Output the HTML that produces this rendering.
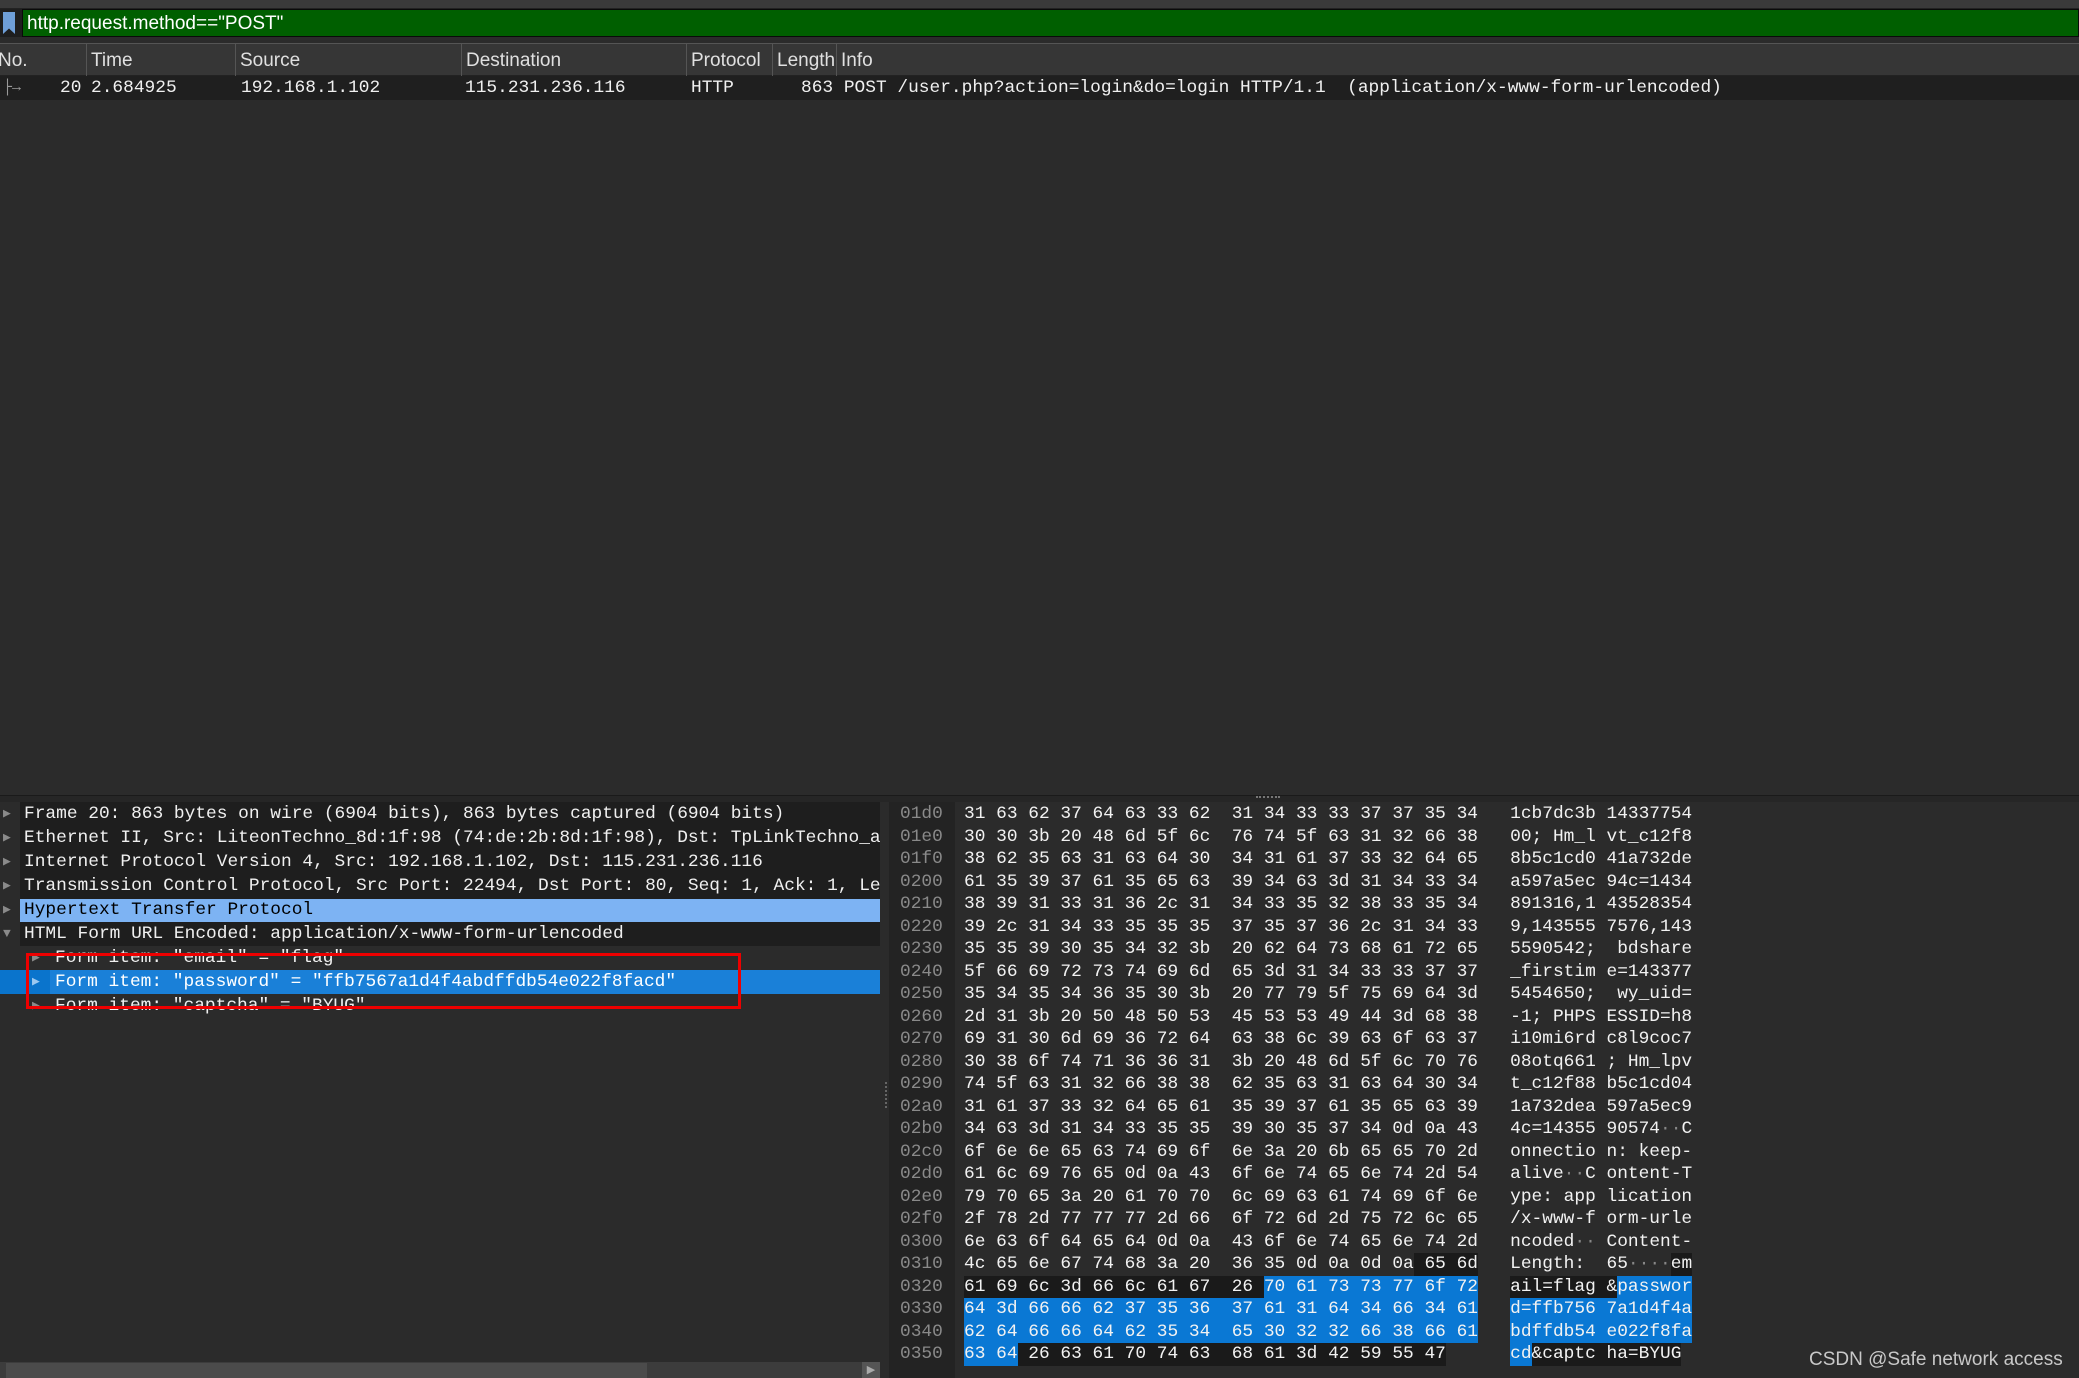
<!DOCTYPE html>
<html><head><meta charset="utf-8"><style>
*{margin:0;padding:0;box-sizing:border-box}
body{width:2079px;height:1378px;background:#2b2b2b;position:relative;overflow:hidden;font-family:"Liberation Sans",sans-serif}
.a{position:absolute}
.mono{font-family:"Liberation Mono",monospace}
.hdr span{position:absolute;top:0;height:32px;line-height:34px;color:#e0e0e0;font-size:19px;border-left:1px solid #555;padding-left:4px}
.tr{position:absolute;left:0;width:880px;height:24px;line-height:24px;font-size:17.85px;color:#f0f0f0;white-space:pre}
.tr .t{position:absolute;left:24px;top:0}
.tr .ar{position:absolute;left:3px;top:0;color:#8a8a8a;font-size:13px}
.pk span{position:absolute;top:0}
pre{font-family:"Liberation Mono",monospace;font-size:17.85px;line-height:22.5px;color:#f2f2f2}
.k{display:inline-block;background:#1a1a1a;height:22.5px}
.b{display:inline-block;background:#0a78d4;height:22.5px}
.d{color:#888}
</style></head><body>
<div class="a" style="left:0;top:0;width:2079px;height:9px;background:#3a3a3a;border-bottom:1px solid #222"></div>
<div class="a" style="left:0;top:9px;width:2079px;height:28px;background:#1e1e1e"></div>
<div class="a" style="left:3px;top:12px;width:12px;height:22px;background:#6f9fd8;clip-path:polygon(0 0,100% 0,100% 100%,50% 75%,0 100%)"></div>
<div class="a" style="left:22px;top:9px;width:2057px;height:28px;background:#005f00;border:1px solid #0a0a0a;color:#fff;font-size:19px;line-height:27px;padding-left:4px">http.request.method=="POST"</div>
<div class="a" style="left:0;top:37px;width:2079px;height:7px;background:#2b2b2b;border-bottom:1px solid #555"></div>
<div class="a hdr" style="left:0;top:44px;width:2079px;height:32px;background:#363636;border-bottom:1px solid #222"><span style="left:-6px;border:none">No.</span><span style="left:86px">Time</span><span style="left:235px">Source</span><span style="left:461px">Destination</span><span style="left:686px">Protocol</span><span style="left:772px">Length</span><span style="left:836px">Info</span></div>
<div class="a mono pk" style="left:0;top:76px;width:2079px;height:24px;background:#1f1f1f;color:#f0f0f0;font-size:17.85px;line-height:24px;white-space:pre"><span style="left:3px;color:#999;font-size:15px">├→</span><span style="left:60px">20</span><span style="left:91px">2.684925</span><span style="left:241px">192.168.1.102</span><span style="left:465px">115.231.236.116</span><span style="left:691px">HTTP</span><span style="left:801px">863 POST /user.php?action=login&amp;do=login HTTP/1.1  (application/x-www-form-urlencoded)</span></div>
<div class="a" style="left:0;top:795px;width:2079px;height:7px;background:#262626;border-top:1px solid #1a1a1a"></div>
<div class="a" style="left:1256px;top:796px;width:24px;height:3px;border-top:2px dotted #777"></div>
<div class="a" style="left:20px;top:802px;width:860px;height:144px;background:#1e1e1e"></div>
<div class="tr mono" style="top:802px"><span class="ar">▶</span><span class="t">Frame 20: 863 bytes on wire (6904 bits), 863 bytes captured (6904 bits)</span></div>
<div class="tr mono" style="top:826px"><span class="ar">▶</span><span class="t">Ethernet II, Src: LiteonTechno_8d:1f:98 (74:de:2b:8d:1f:98), Dst: TpLinkTechno_a</span></div>
<div class="tr mono" style="top:850px"><span class="ar">▶</span><span class="t">Internet Protocol Version 4, Src: 192.168.1.102, Dst: 115.231.236.116</span></div>
<div class="tr mono" style="top:874px"><span class="ar">▶</span><span class="t">Transmission Control Protocol, Src Port: 22494, Dst Port: 80, Seq: 1, Ack: 1, Le</span></div>
<div class="tr mono" style="top:898px"><span class="ar">▶</span><span class="a" style="left:20px;top:1px;width:860px;height:23px;background:#7db3f3"></span><span class="t" style="color:#000">Hypertext Transfer Protocol</span></div>
<div class="tr mono" style="top:922px"><span class="ar">▼</span><span class="t">HTML Form URL Encoded: application/x-www-form-urlencoded</span></div>
<div class="tr mono" style="top:946px"><span class="ar" style="left:32px">▶</span><span class="t" style="left:55px">Form item: "email" = "flag"</span></div>
<div class="tr mono" style="top:970px;background:#0a74cc"><span class="a" style="left:50px;top:0;width:830px;height:24px;background:#1a80d8"></span><span class="ar" style="left:32px;color:#9cc8f0">▶</span><span class="t" style="left:55px;color:#fff">Form item: "password" = "ffb7567a1d4f4abdffdb54e022f8facd"</span></div>
<div class="tr mono" style="top:994px"><span class="ar" style="left:32px">▶</span><span class="t" style="left:55px">Form item: "captcha" = "BYUG"</span></div>
<div class="a" style="left:26px;top:953px;width:715px;height:56px;border:3px solid #ee0000"></div>
<div class="a" style="left:0;top:1362px;width:880px;height:16px;background:#3c3c3c"></div>
<div class="a" style="left:6px;top:1363px;width:641px;height:15px;background:#4b4b4b"></div>
<div class="a" style="left:862px;top:1362px;width:18px;height:16px;background:#555;color:#aaa;font-size:11px;line-height:16px;text-align:center">▶</div>
<div class="a" style="left:880px;top:802px;width:9px;height:576px;background:#2b2b2b"></div>
<div class="a" style="left:885px;top:1082px;width:3px;height:26px;border-left:2px dotted #666"></div>
<div class="a" style="left:889px;top:802px;width:66px;height:576px;background:#232323"></div>
<pre class="a" style="left:900px;top:803px;color:#8a8a8a">01d0
01e0
01f0
0200
0210
0220
0230
0240
0250
0260
0270
0280
0290
02a0
02b0
02c0
02d0
02e0
02f0
0300
0310
0320
0330
0340
0350</pre>
<pre class="a" style="left:964px;top:803px">31 63 62 37 64 63 33 62  31 34 33 33 37 37 35 34   1cb7dc3b 14337754
30 30 3b 20 48 6d 5f 6c  76 74 5f 63 31 32 66 38   00; Hm_l vt_c12f8
38 62 35 63 31 63 64 30  34 31 61 37 33 32 64 65   8b5c1cd0 41a732de
61 35 39 37 61 35 65 63  39 34 63 3d 31 34 33 34   a597a5ec 94c=1434
38 39 31 33 31 36 2c 31  34 33 35 32 38 33 35 34   891316,1 43528354
39 2c 31 34 33 35 35 35  37 35 37 36 2c 31 34 33   9,143555 7576,143
35 35 39 30 35 34 32 3b  20 62 64 73 68 61 72 65   5590542;  bdshare
5f 66 69 72 73 74 69 6d  65 3d 31 34 33 33 37 37   _firstim e=143377
35 34 35 34 36 35 30 3b  20 77 79 5f 75 69 64 3d   5454650;  wy_uid=
2d 31 3b 20 50 48 50 53  45 53 53 49 44 3d 68 38   -1; PHPS ESSID=h8
69 31 30 6d 69 36 72 64  63 38 6c 39 63 6f 63 37   i10mi6rd c8l9coc7
30 38 6f 74 71 36 36 31  3b 20 48 6d 5f 6c 70 76   08otq661 ; Hm_lpv
74 5f 63 31 32 66 38 38  62 35 63 31 63 64 30 34   t_c12f88 b5c1cd04
31 61 37 33 32 64 65 61  35 39 37 61 35 65 63 39   1a732dea 597a5ec9
34 63 3d 31 34 33 35 35  39 30 35 37 34 0d 0a 43   4c=14355 90574<span class="d">··</span>C
6f 6e 6e 65 63 74 69 6f  6e 3a 20 6b 65 65 70 2d   onnectio n: keep-
61 6c 69 76 65 0d 0a 43  6f 6e 74 65 6e 74 2d 54   alive<span class="d">··</span>C ontent-T
79 70 65 3a 20 61 70 70  6c 69 63 61 74 69 6f 6e   ype: app lication
2f 78 2d 77 77 77 2d 66  6f 72 6d 2d 75 72 6c 65   /x-www-f orm-urle
6e 63 6f 64 65 64 0d 0a  43 6f 6e 74 65 6e 74 2d   ncoded<span class="d">··</span> Content-
4c 65 6e 67 74 68 3a 20  36 35 0d 0a 0d 0a<span class="k"> 65 6d</span>   Length:  65<span class="d">····</span><span class="k">em</span>
<span class="k">61 69 6c 3d 66 6c 61 67  26 </span><span class="b">70 61 73 73 77 6f 72</span>   <span class="k">ail=flag &amp;</span><span class="b">passwor</span>
<span class="b">64 3d 66 66 62 37 35 36  37 61 31 64 34 66 34 61</span>   <span class="b">d=ffb756 7a1d4f4a</span>
<span class="b">62 64 66 66 64 62 35 34  65 30 32 32 66 38 66 61</span>   <span class="b">bdffdb54 e022f8fa</span>
<span class="b">63 64</span><span class="k"> 26 63 61 70 74 63  68 61 3d 42 59 55 47</span>      <span class="b">cd</span><span class="k">&amp;captc ha=BYUG</span></pre>
<div class="a" style="left:1809px;top:1349px;color:#c8c8c8;font-size:19px">CSDN @Safe network access</div>
</body></html>
